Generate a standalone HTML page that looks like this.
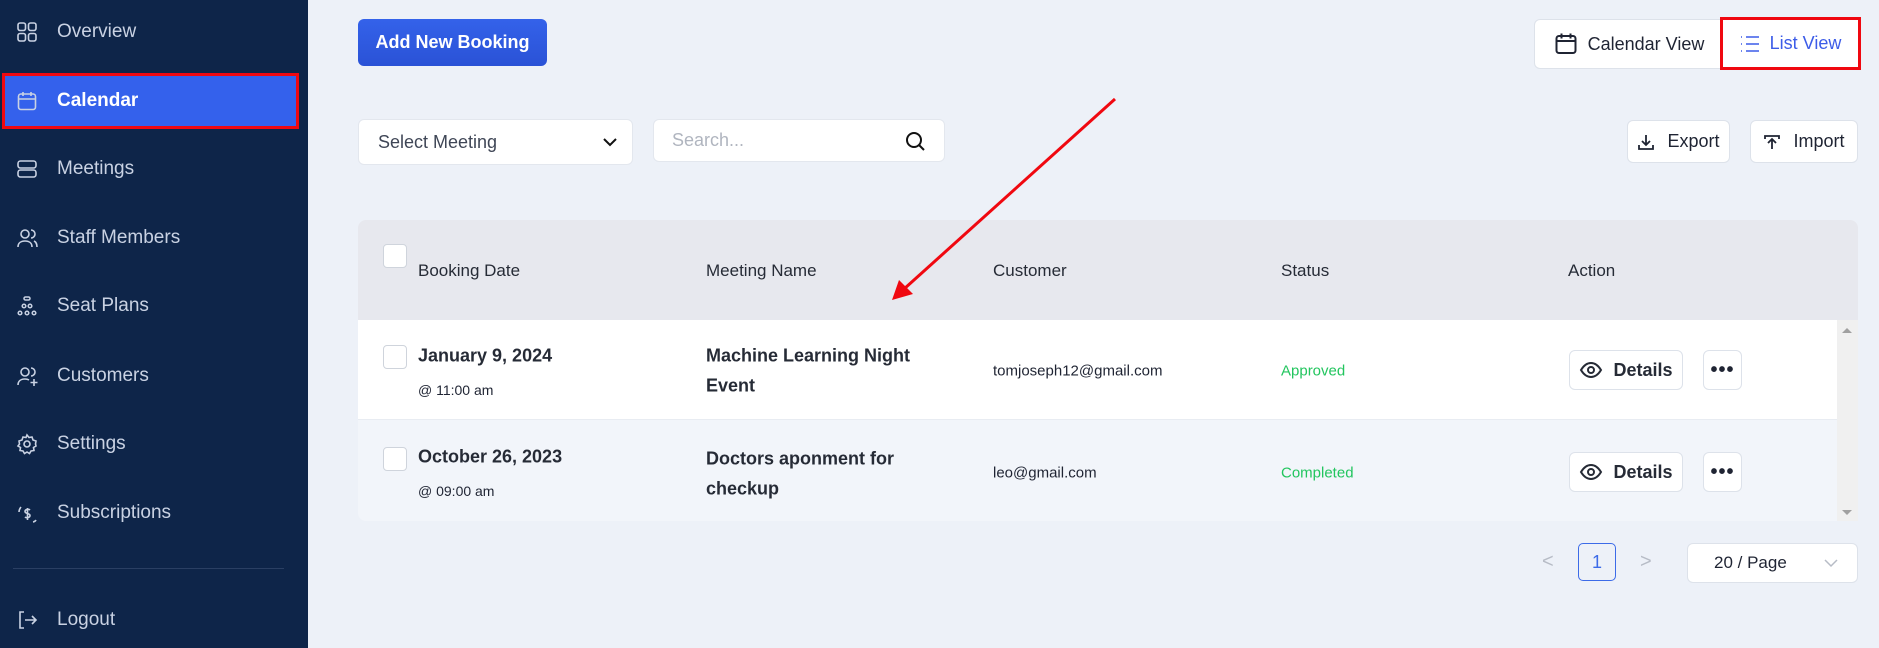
<!DOCTYPE html>
<html><head><meta charset="utf-8"><style>
*{box-sizing:border-box;margin:0;padding:0}
body{width:1879px;height:648px;overflow:hidden;background:#edf1f8;font-family:"Liberation Sans",sans-serif;position:relative;color:#1f2433}
.a{position:absolute}
.sb{left:0;top:0;width:308px;height:648px;background:#0e2549}
.nav{position:absolute;left:57px;font-size:19px;color:#c9d2e3;transform:translateY(-50%)}
.ic{position:absolute;left:16px;width:22px;height:22px;transform:translateY(-50%)}
.btn{position:absolute;background:#fff;border:1px solid #dde2ea;border-radius:6px;font-size:18px;color:#1f2433;display:flex;align-items:center;justify-content:center;gap:10px}
.th{position:absolute;top:271px;transform:translateY(-50%);font-size:17px;color:#262b36}
.cb{position:absolute;width:24px;height:24px;background:#fff;border:1px solid #cfd4dc;border-radius:4px}
.t{position:absolute;transform:translateY(-50%);white-space:nowrap}
.b{font-size:18px;font-weight:bold;color:#262b36}
</style></head><body>
<div class="a sb"></div>
<svg class="ic" style="top:32px" viewBox="0 0 22 22" fill="none" stroke="#c9d2e3" stroke-width="1.6"><rect x="2" y="2" width="7.5" height="7.5" rx="2"/><rect x="12.5" y="2" width="7.5" height="7.5" rx="2"/><rect x="2" y="12.5" width="7.5" height="7.5" rx="2"/><rect x="12.5" y="12.5" width="7.5" height="7.5" rx="2"/></svg>
<div class="nav" style="top:32px">Overview</div>
<div class="a" style="left:2px;top:73px;width:297px;height:56px;background:#3461ec;border:3px solid #f00810"></div>
<svg class="ic" style="top:101px" viewBox="0 0 22 22" fill="none" stroke="#c9d2e3" stroke-width="1.6"><rect x="2.5" y="4" width="17" height="15.5" rx="2.5"/><path d="M2.5 9h17M7 2v4M15 2v4"/></svg>
<div class="nav" style="top:101px;color:#fff;font-weight:bold">Calendar</div>
<svg class="ic" style="top:169px" viewBox="0 0 22 22" fill="none" stroke="#c9d2e3" stroke-width="1.6"><rect x="2" y="3" width="18" height="7" rx="2.5"/><rect x="2" y="12" width="18" height="7" rx="2.5"/></svg>
<div class="nav" style="top:169px">Meetings</div>
<svg class="ic" style="top:238px" viewBox="0 0 22 22" fill="none" stroke="#c9d2e3" stroke-width="1.6"><circle cx="9" cy="7" r="4"/><path d="M2 20c0-4 3-6 7-6s7 2 7 6M15 3a4 4 0 0 1 0 8M18 14c2 1 3 3 3 6"/></svg>
<div class="nav" style="top:238px">Staff Members</div>
<svg class="ic" style="top:306px" viewBox="0 0 22 22" fill="none" stroke="#c9d2e3" stroke-width="1.5"><rect x="8" y="2" width="6" height="3" rx="1.5"/><circle cx="8" cy="11" r="1.8"/><circle cx="14" cy="11" r="1.8"/><circle cx="4" cy="18" r="1.8"/><circle cx="11" cy="18" r="1.8"/><circle cx="18" cy="18" r="1.8"/></svg>
<div class="nav" style="top:306px">Seat Plans</div>
<svg class="ic" style="top:376px" viewBox="0 0 22 22" fill="none" stroke="#c9d2e3" stroke-width="1.6"><circle cx="9" cy="7" r="4"/><path d="M2 20c0-4 3-6 7-6 2 0 3 .4 4 1M15 3a4 4 0 0 1 0 8M18 14v7M14.5 17.5h7"/></svg>
<div class="nav" style="top:376px">Customers</div>
<svg class="ic" style="top:444px" viewBox="0 0 22 22" fill="none" stroke="#c9d2e3" stroke-width="1.6"><circle cx="11" cy="11" r="3"/><path d="M11 2l2 2.5 3-.5 1 3 3 1-.5 3L20 13l-2.5 1.5.5 3-3 .5-1.5 2.5L11 19l-2.5 1.5L7 18l-3-.5.5-3L2 13l1.5-2L3 8l3-1 1-3 3 .5z"/></svg>
<div class="nav" style="top:444px">Settings</div>
<svg class="ic" style="top:513px" viewBox="0 0 22 22" fill="none" stroke="#c9d2e3" stroke-width="1.6"><path d="M5 5a8 8 0 0 0-2 5M14 8c-1-1-5-1-5 1.5S14 11 14 13.5 10 16 9 15M11.5 6v12M17 20a4 4 0 0 0 3-2"/></svg>
<div class="nav" style="top:513px">Subscriptions</div>
<div class="a" style="left:13px;top:568px;width:271px;height:1px;background:#2a3f63"></div>
<svg class="ic" style="top:620px" viewBox="0 0 22 22" fill="none" stroke="#c9d2e3" stroke-width="1.6"><path d="M8 3H4v16h4M9 11h11M16 7l4 4-4 4"/></svg>
<div class="nav" style="top:620px">Logout</div>

<div class="a" style="left:358px;top:19px;width:189px;height:47px;background:linear-gradient(#3462ea,#2a52d6);border-radius:6px;color:#fff;font-size:18px;font-weight:bold;display:flex;align-items:center;justify-content:center">Add New Booking</div>

<div class="btn" style="left:1534px;top:19px;width:190px;height:50px;border-radius:6px 0 0 6px"><svg width="24" height="24" viewBox="0 0 24 24" fill="none" stroke="#1f2433" stroke-width="2"><rect x="2.5" y="4" width="19" height="17" rx="2.5"/><path d="M2.5 9h19M7.5 1.5v5M16.5 1.5v5"/></svg>Calendar View</div>
<div class="btn" style="left:1720px;top:17px;width:141px;height:53px;border:3px solid #f00810;border-radius:0;color:#3c5ce8"><svg width="20" height="18" viewBox="0 0 20 18" fill="none" stroke="#3c5ce8" stroke-width="1.6"><path d="M1 2h1M1 9h1M1 16h1M6 2h13M6 9h13M6 16h13"/></svg>List View</div>

<div class="btn" style="left:358px;top:119px;width:275px;height:46px;border-color:#e3e7ee;justify-content:space-between;padding:0 14px 0 19px;color:#3f4656"><span>Select Meeting</span><svg width="16" height="10" viewBox="0 0 16 10" fill="none" stroke="#111" stroke-width="2"><path d="M2 2l6 6 6-6"/></svg></div>
<div class="btn" style="left:653px;top:119px;width:292px;height:43px;border-color:#e3e7ee;justify-content:space-between;padding:0 18px;color:#b0b5bf"><span>Search...</span><svg width="22" height="22" viewBox="0 0 22 22" fill="none" stroke="#111" stroke-width="2"><circle cx="10" cy="10" r="7"/><path d="M15 15l5 5"/></svg></div>
<div class="btn" style="left:1627px;top:120px;width:103px;height:43px;gap:12px"><svg width="18" height="18" viewBox="0 0 18 18" fill="none" stroke="#1f2433" stroke-width="1.8"><path d="M9 2v10M5 8l4 4 4-4M2 12v4h14v-4"/></svg>Export</div>
<div class="btn" style="left:1750px;top:120px;width:108px;height:43px;gap:12px"><svg width="18" height="18" viewBox="0 0 18 18" fill="none" stroke="#1f2433" stroke-width="1.8"><path d="M2 6V3h14v3M9 16V7M5 10l4-4 4 4"/></svg>Import</div>

<div class="a" style="left:358px;top:220px;width:1500px;height:100px;background:#e7e8ee;border-radius:8px 8px 0 0"></div>
<div class="a" style="left:358px;top:320px;width:1479px;height:100px;background:#fff;border-bottom:1px solid #e8ecf2"></div>
<div class="a" style="left:358px;top:420px;width:1479px;height:101px;background:#f2f5fa;border-radius:0 0 0 8px"></div>
<div class="a" style="left:1837px;top:320px;width:21px;height:201px;background:#f0f0f0"></div>
<div class="a" style="left:1842px;top:328px;border:5px solid transparent;border-bottom-color:#a0a0a0;border-top:0"></div>
<div class="a" style="left:1842px;top:510px;border:5px solid transparent;border-top-color:#a0a0a0;border-bottom:0"></div>

<div class="cb" style="left:383px;top:244px"></div>
<div class="th" style="left:418px">Booking Date</div>
<div class="th" style="left:706px">Meeting Name</div>
<div class="th" style="left:993px">Customer</div>
<div class="th" style="left:1281px">Status</div>
<div class="th" style="left:1568px">Action</div>

<div class="cb" style="left:383px;top:345px"></div>
<div class="t b" style="left:418px;top:356px">January 9, 2024</div>
<div class="t" style="left:418px;top:390px;font-size:14px">@ 11:00 am</div>
<div class="t b" style="left:706px;top:356px">Machine Learning Night</div>
<div class="t b" style="left:706px;top:386px">Event</div>
<div class="t" style="left:993px;top:371px;font-size:15px">tomjoseph12@gmail.com</div>
<div class="t" style="left:1281px;top:371px;font-size:15px;color:#22c55e">Approved</div>

<div class="cb" style="left:383px;top:447px"></div>
<div class="t b" style="left:418px;top:457px">October 26, 2023</div>
<div class="t" style="left:418px;top:491px;font-size:14px">@ 09:00 am</div>
<div class="t b" style="left:706px;top:459px">Doctors aponment for</div>
<div class="t b" style="left:706px;top:489px">checkup</div>
<div class="t" style="left:993px;top:473px;font-size:15px">leo@gmail.com</div>
<div class="t" style="left:1281px;top:473px;font-size:15px;color:#22c55e">Completed</div>

<div class="btn" style="left:1569px;top:350px;width:114px;height:40px;font-weight:bold;font-size:18px;color:#262b36"><svg width="24" height="18" viewBox="0 0 24 18" fill="none" stroke="#262b36" stroke-width="2"><path d="M2 9c3-5 6-7 10-7s7 2 10 7c-3 5-6 7-10 7S5 14 2 9z"/><circle cx="12" cy="9" r="3"/></svg>Details</div>
<div class="btn" style="left:1703px;top:350px;width:39px;height:40px;font-weight:bold;font-size:20px;letter-spacing:1px">•••</div>
<div class="btn" style="left:1569px;top:452px;width:114px;height:40px;font-weight:bold;font-size:18px;color:#262b36"><svg width="24" height="18" viewBox="0 0 24 18" fill="none" stroke="#262b36" stroke-width="2"><path d="M2 9c3-5 6-7 10-7s7 2 10 7c-3 5-6 7-10 7S5 14 2 9z"/><circle cx="12" cy="9" r="3"/></svg>Details</div>
<div class="btn" style="left:1703px;top:452px;width:39px;height:40px;font-weight:bold;font-size:20px;letter-spacing:1px">•••</div>

<div class="t" style="left:1542px;top:562px;font-size:20px;color:#b7bcc6">&lt;</div>
<div class="a" style="left:1578px;top:543px;width:38px;height:38px;border:1px solid #3c6be8;border-radius:5px;color:#3c6be8;font-size:18px;display:flex;align-items:center;justify-content:center">1</div>
<div class="t" style="left:1640px;top:562px;font-size:20px;color:#b7bcc6">&gt;</div>
<div class="btn" style="left:1687px;top:543px;width:171px;height:40px;justify-content:space-between;padding:0 18px 0 26px;font-size:17px"><span>20 / Page</span><svg width="16" height="10" viewBox="0 0 16 10" fill="none" stroke="#b7bcc6" stroke-width="1.5"><path d="M2 2l6 6 6-6"/></svg></div>

<svg class="a" style="left:0;top:0" width="1879" height="648"><line x1="1115" y1="99" x2="904" y2="289" stroke="#f00810" stroke-width="3"/><polygon points="892,300 899,280 913,294" fill="#f00810"/></svg>
</body></html>
